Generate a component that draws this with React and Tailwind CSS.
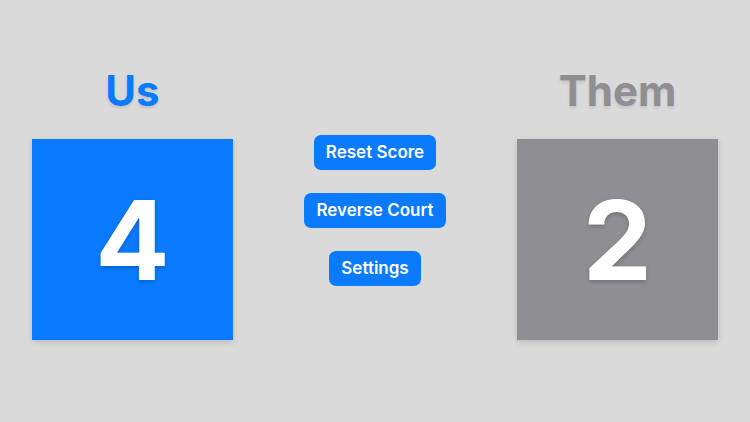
import React, { useState } from 'react';

const font = { fontFamily: 'Inter, "Liberation Sans", sans-serif' };

const TeamColumn = ({ name, score, nameClass, boxClass }) => (
  <div className="flex w-[201px] flex-col items-center pt-[66px]">
    {/* Team name */}
    <h1 className={`h-[50px] text-[42px] font-bold leading-[50px] [text-shadow:0_2px_3px_rgba(0,0,0,0.12)] ${nameClass}`}>
      {name}
    </h1>

    {/* Score card */}
    <div className={`mt-[23px] flex h-[201px] w-[201px] items-center justify-center shadow-[0_2px_6px_rgba(0,0,0,0.15)] ${boxClass}`}>
      <span className="text-[110px] font-bold leading-none text-white [text-shadow:0_2px_4px_rgba(0,0,0,0.2)]">
        {score}
      </span>
    </div>
  </div>
);

const ActionButton = ({ children, onClick }) => (
  <button
    onClick={onClick}
    className="h-[35px] rounded-[7px] bg-[#0a7aff] px-[12px] text-[17px] font-semibold text-white"
  >
    {children}
  </button>
);

const App = () => {
  const [us, setUs] = useState(4);
  const [them, setThem] = useState(2);

  return (
    <div className="flex h-[422px] w-[750px] bg-[#dadada] px-[32px]" style={font}>
      <TeamColumn name="Us" score={us} nameClass="text-[#0a7aff]" boxClass="bg-[#0a7aff]" />

      {/* Middle controls */}
      <div className="flex flex-1 flex-col items-center gap-[23px] pt-[135px]">
        <ActionButton onClick={() => { setUs(0); setThem(0); }}>Reset Score</ActionButton>
        <ActionButton>Reverse Court</ActionButton>
        <ActionButton>Settings</ActionButton>
      </div>

      <TeamColumn name="Them" score={them} nameClass="text-[#8e8e93]" boxClass="bg-[#8e8e93]" />
    </div>
  );
};

export default App;
